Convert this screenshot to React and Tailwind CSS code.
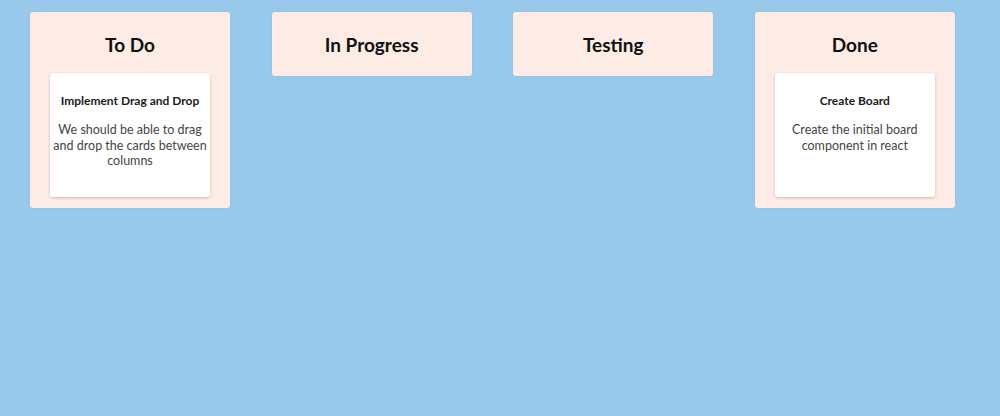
import React from "react";

const columns = [
    {
        id: "todo",
        title: "To Do",
        cards: [
            {
                id: 1,
                title: "Implement Drag and Drop",
                description: "We should be able to drag and drop the cards between columns",
            },
        ],
    },
    { id: "progress", title: "In Progress", cards: [] },
    { id: "testing", title: "Testing", cards: [] },
    {
        id: "done",
        title: "Done",
        cards: [
            {
                id: 2,
                title: "Create Board",
                description: "Create the initial board component in react",
            },
        ],
    },
];

const Card = ({ card }) => (
    <div className="h-[124px] bg-white rounded-[3px] shadow-[0_1px_3px_rgba(0,0,0,0.2)] px-[3px] pt-[20px] text-center">
        <h3 className="text-[12px] leading-4 font-bold text-[#1b1b1b]">{card.title}</h3>
        <p className="mt-[13px] text-[12.5px] leading-[15.5px] text-[#454545]">{card.description}</p>
    </div>
);

const Column = ({ column }) => (
    <div className="w-[200px] bg-[#fcece5] rounded-[3px] shadow-[0_0_2px_rgba(0,0,0,0.08)]">
        <div className="h-[64px] pt-[3px] flex items-center justify-center">
            <h2 className="text-[19px] font-bold text-[#111]">{column.title}</h2>
        </div>
        {column.cards.length > 0 && (
            <div className="-mt-[3px] px-5 pb-[11px] flex flex-col gap-3">
                {column.cards.map((card) => (
                    <Card key={card.id} card={card} />
                ))}
            </div>
        )}
    </div>
);

export default function App() {
    return (
        <div
            className="w-full h-[416px] bg-[#98c9eb] pt-3 pl-[30px]"
            style={{ fontFamily: 'Lato, "Noto Sans", sans-serif' }}
        >
            <div className="flex items-start gap-[41.6px]">
                {columns.map((column) => (
                    <Column key={column.id} column={column} />
                ))}
            </div>
        </div>
    );
}
